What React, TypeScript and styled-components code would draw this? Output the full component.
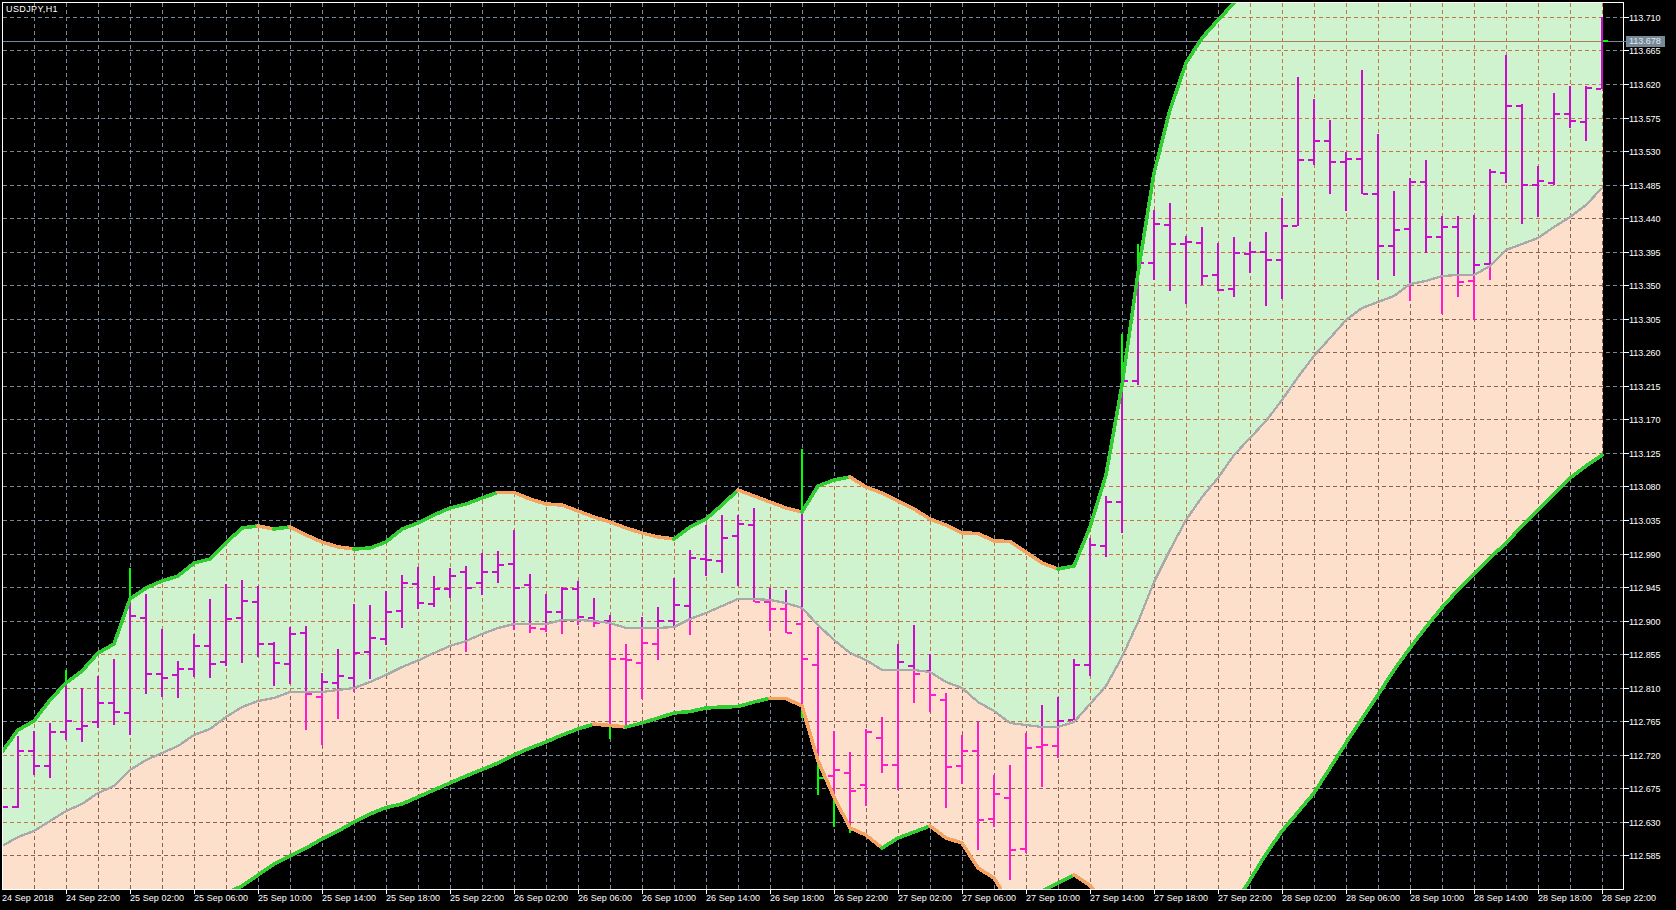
import * as React from "react";
import styled, { createGlobalStyle } from "styled-components";

const GlobalStyle = createGlobalStyle`
  html, body {
    margin: 0;
    padding: 0;
    background: #000;
    overflow: hidden;
  }
`;

const Terminal = styled.div`
  display: grid;
  grid-template-columns: 1622px 52px;
  grid-template-rows: 888px 18px;
  width: 1676px;
  height: 910px;
  box-sizing: border-box;
  padding: 2px 0 0 2px;
  background: #000;
  color: #fff;
  font-family: "Liberation Sans", Arial, sans-serif;
  font-size: 9px;
`;

const ChartBox = styled.div`
  position: relative;
  box-sizing: border-box;
  border: 1px solid #fff;
  overflow: hidden;
`;

const Title = styled.div`
  position: absolute;
  left: 3px;
  top: 1px;
  line-height: 11px;
  letter-spacing: 0.4px;
`;

const PriceAxis = styled.div`
  position: relative;
  padding-top: 15px;
`;

const PriceRow = styled.div<{ $h: number }>`
  display: flex;
  height: ${(p) => p.$h}px;
`;

const PriceTick = styled.span`
  width: 5px;
  height: 1px;
  background: #fff;
`;

const PriceLabel = styled.span`
  line-height: 2px;
  letter-spacing: -0.05px;
`;

const PriceTag = styled.div`
  position: absolute;
  left: 2px;
  top: 34px;
  width: 39px;
  height: 11px;
  box-sizing: border-box;
  padding-left: 3px;
  line-height: 11px;
  background: #778899;
  color: #e4e8ec;

  &::before {
    content: "";
    position: absolute;
    left: -3px;
    top: 5px;
    width: 3px;
    height: 1px;
    background: #778899;
  }
`;

const TimeAxis = styled.div`
  grid-column: 1 / 3;
  display: flex;
`;

const TimeCell = styled.div<{ $tick?: boolean }>`
  position: relative;
  flex: 0 0 64px;
  padding-top: 3px;
  line-height: 11px;
  letter-spacing: 0.05px;
  white-space: nowrap;

  &::before {
    content: "";
    display: ${(p) => (p.$tick ? "block" : "none")};
    position: absolute;
    left: 0;
    top: -1px;
    width: 1px;
    height: 5px;
    background: #fff;
  }
`;

const OFF = 950;

const UPPER: number[] = [
  752, 730, 721, 700, 683, 671, 653, 644, 599, 588, 581, 576, 563, 559, 543, 528, 526, 529, 527, 535,
  542, 547, 549, 548, 542, 529, 523, 515, 508, 504, 498, 492.3, 492.5, 499, 504, 505, 511, 517, 522, 528,
  533, 537, 539, 527, 519, 505, 490, 496, 502, 508, 512, 486, 480, 477, 487, 493, 501, 509, 519, 525,
  533, 533.5, 541, 541.5, 552, 563, 569, 566, 527, 475, 385, 273, 173, 110, 63, 38, 20, 3, -14,
  ...Array(22).fill(-40),
];

const MIDDLE: number[] = [
  846, 837, 831, 821, 811, 804, 793, 786, 770, 760, 753, 746, 735, 729, 717, 707, 701, 698, 692, 692,
  692, 690, 688, 682, 675, 667, 660.5, 653, 646, 641, 634, 628, 624, 624, 624, 620, 620, 621, 623, 628,
  628, 628, 627, 619, 613, 606, 599, 599, 600, 603, 608, 625, 640, 653, 660, 670, 670, 670, 672, 682,
  688, 702, 711, 723, 725, 727, 727, 722, 704, 686, 657, 622, 582, 550, 520, 497, 478, 455, 438, 421,
  400, 377, 356, 338, 320, 308, 302, 296, 284, 281, 276, 275, 275, 266, 250, 244, 238, 227, 217, 205, 188,
];

const LOWER: number[] = [
  ...Array(13).fill(OFF),
  902, 893, 886, 875, 864, 856, 848, 839, 831, 822, 814, 807.5, 804, 797, 790, 783, 776, 769.5, 763, 755,
  748, 742, 735, 729, 724, 725.5, 727, 723, 718, 713, 711.5, 708, 707, 706.5, 702, 698.3, 698.5, 706, 761, 797,
  828, 835, 848, 838, 832, 826, 838, 843, 868, 878, 905, 920, 891, 883, 875, 885.5, 905,
  ...Array(7).fill(930),
  905, 880, 854, 831, 812, 793, 768, 743, 719, 695, 670, 648, 627, 607.5, 590, 574, 558, 543, 526, 510, 494, 478, 466, 455,
];

// high, low, open, close in screen rows, one bar each 16px from x=2
const BARS: number[][] = [
  [790, 820, 800, 807], [736, 808, 807, 751], [731, 775, 751, 766], [723, 778, 766, 732],
  [670, 740, 732, 721], [688, 742, 729, 726], [676, 728, 722, 703], [659, 725, 703, 712],
  [568, 735, 713, 616], [594, 694, 618, 674], [629, 697, 674, 678], [661, 698, 675, 669],
  [634, 677, 669, 646], [599, 678, 646, 664], [584, 666, 662, 619], [580, 663, 618, 601],
  [586, 657, 602, 644], [642, 686, 644, 663], [627, 684, 664, 634], [626, 730, 633, 694],
  [673, 745, 697, 682], [649, 719, 683, 676], [604, 692, 678, 653], [605, 679, 652, 638],
  [591, 645, 639, 612], [575, 628, 611, 583], [567, 609, 584, 603], [576, 607, 604, 589],
  [568, 598, 589, 576], [566, 652, 572, 588], [553, 595, 583, 572], [551, 583, 572, 565],
  [530, 630, 564, 588], [574, 633, 585, 628], [594, 632, 629, 612], [587, 634, 612, 589],
  [581, 625, 589, 617], [598, 627, 618, 623], [615, 739, 621, 659], [644, 726, 659, 660],
  [617, 699, 663, 643], [607, 660, 644, 621], [578, 626, 621, 605], [550, 635, 606, 558],
  [525, 576, 559, 560], [515, 573, 561, 538], [515, 586, 536, 524], [508, 602, 525, 602],
  [588, 631, 602, 609], [590, 633, 609, 633], [449, 718, 624, 659], [627, 795, 665, 778],
  [731, 827, 776, 770], [752, 833, 773, 791], [729, 806, 785, 732], [717, 773, 738, 765],
  [644, 790, 765, 662], [625, 703, 666, 674], [654, 712, 671, 695], [693, 808, 700, 767],
  [735, 784, 766, 751], [722, 850, 751, 820], [775, 827, 819, 794], [765, 880, 798, 850],
  [733, 853, 849, 748], [705, 787, 747, 745], [697, 758, 746, 721], [659, 720, 720, 665],
  [538, 676, 665, 545], [496, 557, 546, 502], [334, 533, 502, 381], [244, 385, 381, 263],
  [210, 280, 263, 224], [203, 291, 225, 244], [236, 304, 244, 242], [227, 285, 243, 276],
  [243, 291, 275, 290], [237, 297, 289, 253], [242, 273, 254, 252], [232, 306, 252, 260],
  [198, 299, 260, 226], [77, 226, 226, 160], [99, 165, 160, 141], [120, 194, 141, 162],
  [152, 211, 162, 159], [70, 194, 159, 194], [134, 280, 194, 246], [191, 276, 246, 230],
  [178, 301, 229, 182], [160, 253, 182, 237], [216, 314, 237, 227], [216, 297, 227, 282],
  [215, 320, 281, 265], [169, 280, 264, 172], [55, 183, 173, 106], [104, 224, 106, 185],
  [166, 217, 185, 181], [93, 185, 183, 114], [86, 128, 114, 121], [86, 141, 122, 88],
  [17, 89, 89, 41],
];

const GRID_ROWS = [
  17, 50, 84, 118, 151, 185, 218, 252, 285, 319, 352, 386, 419, 453, 486, 520, 554, 587, 621, 654, 688, 721, 755, 788, 822, 855,
];

const CURRENT_ROW = 41;

const barX = (i: number) => 2 + 16 * i;

const toPoints = (ys: number[]) => ys.map((y, i) => `${i === ys.length - 1 ? 1603 : barX(i)},${y}`);

const between = (top: number[], bottom: number[]) => [...toPoints(top), ...toPoints(bottom).reverse()].join(" ");

const Band = ({ ys }: { ys: number[] }) => (
  <g strokeWidth={3.6} shapeRendering="crispEdges" strokeLinecap="round">
    {ys.slice(1).map((y, i) => (
      <line key={i} x1={barX(i)} y1={ys[i]} x2={barX(i + 1)} y2={y} stroke={y < ys[i] ? "#32cd32" : "#f4a460"} />
    ))}
  </g>
);

const Chart = () => (
  <svg width={1620} height={886} viewBox="3 3 1620 886" style={{ display: "block" }}>
    <defs>
      <clipPath id="upperCloud">
        <polygon points={between(UPPER, MIDDLE)} />
      </clipPath>
      <clipPath id="lowerCloud">
        <polygon points={between(MIDDLE, LOWER)} />
      </clipPath>
      <g id="gridLines" strokeDasharray="4 3" shapeRendering="crispEdges">
        {GRID_ROWS.map((y) => (
          <line key={y} x1={3} y1={y + 0.5} x2={1623} y2={y + 0.5} />
        ))}
        {Array.from({ length: 50 }, (_, j) => 34 + 32 * j).map((x) => (
          <line key={x} x1={x + 0.5} y1={3} x2={x + 0.5} y2={889} />
        ))}
      </g>
      <line id="priceLine" x1={3} y1={CURRENT_ROW + 0.5} x2={1623} y2={CURRENT_ROW + 0.5} shapeRendering="crispEdges" />
      <g id="bars" shapeRendering="crispEdges">
        {BARS.map(([high, low, open, close], i) => {
          const x = barX(i);
          return (
            <React.Fragment key={i}>
              <rect x={x - 1} y={high} width={2} height={low - high} />
              <rect x={x - 6} y={open - 1} width={5} height={2} />
              <rect x={x + 1} y={close - 1} width={5} height={2} />
            </React.Fragment>
          );
        })}
      </g>
    </defs>

    <polygon points={between(UPPER, MIDDLE)} fill="#cff3cf" />
    <polygon points={between(MIDDLE, LOWER)} fill="#fce0cb" />

    <use href="#gridLines" stroke="#778899" />
    <use href="#gridLines" stroke="#c8744a" clipPath="url(#upperCloud)" />
    <use href="#gridLines" stroke="#8f5f4f" clipPath="url(#lowerCloud)" />

    <use href="#priceLine" stroke="#778899" />
    <use href="#priceLine" stroke="#a5815f" clipPath="url(#upperCloud)" />

    <use href="#bars" fill="#00ff00" />
    <use href="#bars" fill="#cc0ccc" clipPath="url(#upperCloud)" />
    <use href="#bars" fill="#ff1cc8" clipPath="url(#lowerCloud)" />

    <Band ys={UPPER} />
    <Band ys={LOWER} />
    <polyline
      points={MIDDLE.map((y, i) => `${barX(i)},${y}`).join(" ")}
      fill="none"
      stroke="#a9a9a9"
      strokeWidth={2.3}
      shapeRendering="crispEdges"
    />
  </svg>
);

const TIME_LABELS = (() => {
  const labels = ["24 Sep 2018"];
  for (let hours = 22; hours <= 22 + 96; hours += 4) {
    const day = 24 + Math.floor(hours / 24);
    const hour = String(hours % 24).padStart(2, "0");
    labels.push(`${day} Sep ${hour}:00`);
  }
  return labels;
})();

export default function App() {
  return (
    <>
      <GlobalStyle />
      <Terminal>
        <ChartBox>
          <Chart />
          <Title>USDJPY,H1</Title>
        </ChartBox>
        <PriceAxis>
          {GRID_ROWS.map((y, k) => (
            <PriceRow key={y} $h={(GRID_ROWS[k + 1] ?? y + 33) - y}>
              <PriceTick />
              <PriceLabel>{(113.71 - 0.045 * k).toFixed(3)}</PriceLabel>
            </PriceRow>
          ))}
          <PriceTag>113.678</PriceTag>
        </PriceAxis>
        <TimeAxis>
          {TIME_LABELS.map((label, i) => (
            <TimeCell key={label} $tick={i > 0}>
              {label}
            </TimeCell>
          ))}
        </TimeAxis>
      </Terminal>
    </>
  );
}
